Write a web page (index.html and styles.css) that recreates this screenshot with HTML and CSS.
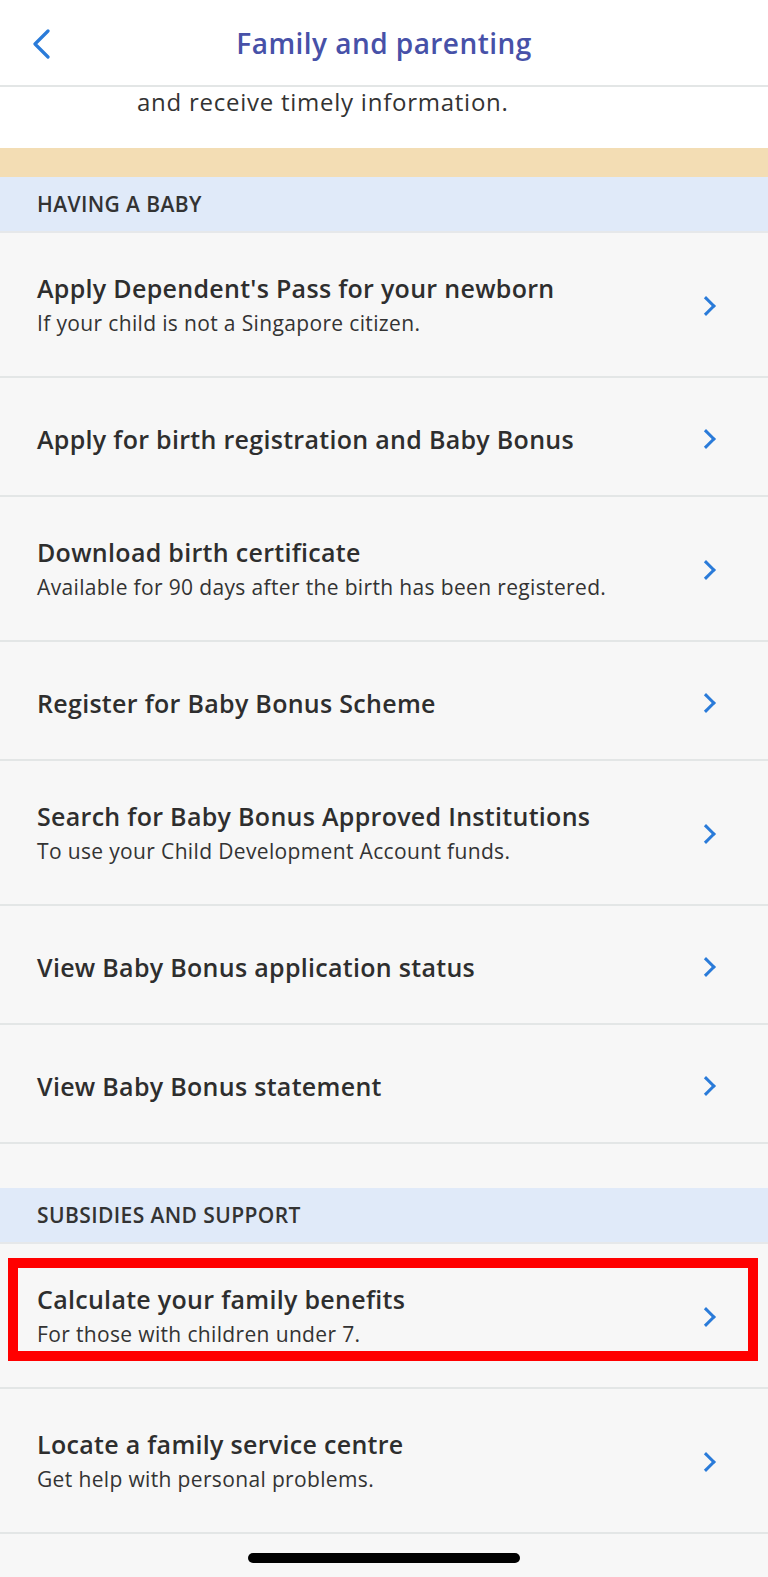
FILE: index.html
```html
<!DOCTYPE html>
<html lang="en">
<head>
    <meta charset="UTF-8">
    <meta name="viewport" content="width=device-width, initial-scale=1.0">
    <title>Family and parenting</title>
    <link rel="stylesheet" href="styles.css">
</head>
<body>
    <!-- TOP BAR -->
    <header class="top-bar">
        <a href="#" class="back-btn" aria-label="Back">
            <svg width="20" height="30" viewBox="0 0 20 30"><path d="M16 2 L3 15 L16 28" fill="none" stroke="#2a7bd9" stroke-width="3.2" stroke-linecap="round" stroke-linejoin="round"/></svg>
        </a>
        <h1 class="page-title">Family and parenting</h1>
    </header>

    <div class="intro">
        <p>and receive timely information.</p>
    </div>
    <div class="notice-strip"></div>

    <!-- HAVING A BABY -->
    <div class="section-head">HAVING A BABY</div>
    <ul class="link-list">
        <li class="link-row two-line">
            <div class="link-text">
                <span class="link-title">Apply Dependent's Pass for your newborn</span>
                <span class="link-sub">If your child is not a Singapore citizen.</span>
            </div>
            <span class="chevron"></span>
        </li>
        <li class="link-row">
            <div class="link-text">
                <span class="link-title">Apply for birth registration and Baby Bonus</span>
            </div>
            <span class="chevron"></span>
        </li>
        <li class="link-row two-line">
            <div class="link-text">
                <span class="link-title">Download birth certificate</span>
                <span class="link-sub">Available for 90 days after the birth has been registered.</span>
            </div>
            <span class="chevron"></span>
        </li>
        <li class="link-row">
            <div class="link-text">
                <span class="link-title">Register for Baby Bonus Scheme</span>
            </div>
            <span class="chevron"></span>
        </li>
        <li class="link-row two-line">
            <div class="link-text">
                <span class="link-title">Search for Baby Bonus Approved Institutions</span>
                <span class="link-sub">To use your Child Development Account funds.</span>
            </div>
            <span class="chevron"></span>
        </li>
        <li class="link-row">
            <div class="link-text">
                <span class="link-title">View Baby Bonus application status</span>
            </div>
            <span class="chevron"></span>
        </li>
        <li class="link-row">
            <div class="link-text">
                <span class="link-title">View Baby Bonus statement</span>
            </div>
            <span class="chevron"></span>
        </li>
    </ul>

    <!-- SUBSIDIES AND SUPPORT -->
    <div class="section-head spaced">SUBSIDIES AND SUPPORT</div>
    <ul class="link-list">
        <li class="link-row two-line">
            <div class="highlight-box"></div>
            <div class="link-text">
                <span class="link-title">Calculate your family benefits</span>
                <span class="link-sub">For those with children under 7.</span>
            </div>
            <span class="chevron"></span>
        </li>
        <li class="link-row two-line">
            <div class="link-text">
                <span class="link-title">Locate a family service centre</span>
                <span class="link-sub">Get help with personal problems.</span>
            </div>
            <span class="chevron"></span>
        </li>
    </ul>

    <div class="home-bar"><span></span></div>
</body>
</html>
```

FILE: styles.css
```css
* {
    box-sizing: border-box;
}

body {
    margin: 0;
    background: #f7f7f7;
    font-family: "Open Sans", "Noto Sans", sans-serif;
    color: #2e2e2e;
}

/* Top bar */
.top-bar {
    position: relative;
    height: 87px;
    background: white;
    border-bottom: 2px solid #e3e6e6;
    display: flex;
    align-items: center;
    justify-content: center;
}

.back-btn {
    position: absolute;
    left: 32px;
    top: 29px;
    display: block;
    line-height: 0;
}

.page-title {
    margin: 0;
    font-size: 28px;
    font-weight: 600;
    color: #4751a8;
    letter-spacing: 0.45px;
}

.intro {
    background: white;
    height: 61px;
    padding-left: 137px;
}

.intro p {
    margin: 0;
    font-size: 24px;
    line-height: 30px;
    letter-spacing: 0.75px;
    color: #333;
}

.notice-strip {
    height: 29px;
    background: #f3ddb4;
}

/* Section headers */
.section-head {
    height: 56px;
    background: #e0eaf9;
    border-bottom: 2px solid #e6e8ea;
    padding: 0 37px;
    display: flex;
    align-items: center;
    font-size: 21px;
    font-weight: 600;
    letter-spacing: 0.4px;
    color: #333;
}

.section-head.spaced {
    margin-top: 44px;
}

/* Link rows */
.link-list {
    list-style: none;
    margin: 0;
    padding: 0;
}

.link-row {
    position: relative;
    height: 119px;
    padding: 4px 50px 0 37px;
    display: flex;
    align-items: center;
    border-bottom: 2px solid #e3e6e6;
}

.link-row.two-line {
    height: 145px;
    padding-top: 2px;
}

.link-text {
    flex: 1;
    display: flex;
    flex-direction: column;
}

.link-title {
    font-size: 25px;
    font-weight: 600;
    line-height: 34px;
    letter-spacing: 0.3px;
    color: #2e2e2e;
}

.link-sub {
    font-size: 21px;
    line-height: 36px;
    letter-spacing: 0.35px;
    color: #333;
}

.chevron {
    width: 14px;
    height: 14px;
    border-top: 3px solid #2a7bd9;
    border-right: 3px solid #2a7bd9;
    transform: rotate(45deg);
    margin-right: 5px;
}

.highlight-box {
    position: absolute;
    left: 8px;
    right: 10px;
    top: 14px;
    height: 103px;
    border: 10px solid #ff0000;
    pointer-events: none;
}

/* Home indicator */
.home-bar {
    height: 44px;
    display: flex;
    justify-content: center;
    padding-top: 19px;
}

.home-bar span {
    width: 272px;
    height: 10px;
    border-radius: 5px;
    background: #000;
}
```
